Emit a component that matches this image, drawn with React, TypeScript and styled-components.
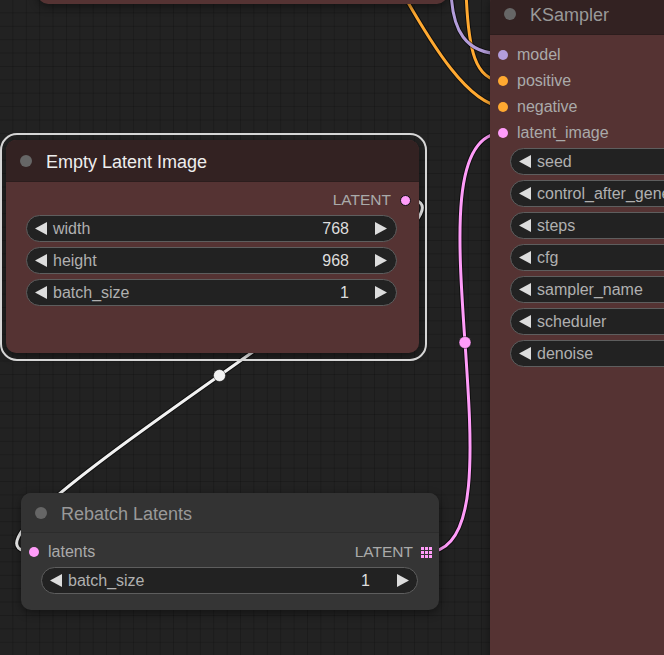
import React from "react";
import styled, { createGlobalStyle, css } from "styled-components";

const GlobalStyle = createGlobalStyle`
  html, body { margin: 0; padding: 0; background: #222; }
  body { font-family: "Liberation Sans", Arial, sans-serif; }
`;

const Canvas = styled.div`
  position: relative;
  width: 664px;
  height: 655px;
  overflow: hidden;
  background-color: #222;
  background-image:
    linear-gradient(to right, rgba(0, 0, 0, 0.18) 1px, transparent 1px),
    linear-gradient(to bottom, rgba(0, 0, 0, 0.18) 1px, transparent 1px);
  background-size: 13.4px 13.4px;
  background-position: -1px -1px;
  font-family: "Liberation Sans", Arial, sans-serif;
`;

const Wires = styled.svg`
  position: absolute;
  inset: 0;
  width: 664px;
  height: 655px;
`;

const Node = styled.div<{
  $x: number;
  $y: number;
  $w: number;
  $h?: number;
  $bg: string;
  $selected?: boolean;
}>`
  position: absolute;
  left: ${(p) => p.$x}px;
  top: ${(p) => p.$y}px;
  width: ${(p) => p.$w}px;
  ${(p) => (p.$h ? `height: ${p.$h}px;` : "")}
  display: flex;
  flex-direction: column;
  background: ${(p) => p.$bg};
  border-radius: 10px;
  box-shadow: 0 3px 10px rgba(0, 0, 0, 0.45);
  ${(p) =>
    p.$selected &&
    css`
      &::before {
        content: "";
        position: absolute;
        inset: -7px -8px -8px -6px;
        border: 2px solid #d6d6d6;
        border-radius: 17px;
        pointer-events: none;
      }
    `}
`;

const TitleBar = styled.div<{ $bg: string; $h?: number }>`
  height: ${(p) => p.$h ?? 42}px;
  flex: none;
  display: flex;
  align-items: center;
  gap: 14px;
  padding-left: 14px;
  background: ${(p) => p.$bg};
  border-radius: 10px 10px 0 0;
  border-bottom: 1px solid rgba(0, 0, 0, 0.12);
  box-sizing: border-box;
`;

const TitleDot = styled.span`
  width: 12px;
  height: 12px;
  border-radius: 50%;
  background: #666;
  flex: none;
`;

const TitleText = styled.span<{ $selected?: boolean }>`
  font-size: 18px;
  line-height: 20px;
  padding-top: 3px;
  color: ${(p) => (p.$selected ? "#eeeeee" : "#999999")};
  white-space: nowrap;
`;

const Body = styled.div<{ $pt?: number }>`
  display: flex;
  flex-direction: column;
  padding-top: ${(p) => p.$pt ?? 6}px;
`;

const SlotRow = styled.div`
  height: 26px;
  display: flex;
  align-items: center;
`;

const InSlot = styled.div`
  display: flex;
  align-items: center;
  gap: 9px;
  padding-left: 8px;
`;

const OutSlot = styled.div<{ $pr?: number; $gap?: number }>`
  margin-left: auto;
  display: flex;
  align-items: center;
  gap: ${(p) => p.$gap ?? 9}px;
  padding-right: ${(p) => p.$pr ?? 9}px;
`;

const Dot = styled.span<{ $color: string; $ring?: boolean }>`
  width: ${(p) => (p.$ring ? 11 : 10)}px;
  height: ${(p) => (p.$ring ? 11 : 10)}px;
  border-radius: 50%;
  background: ${(p) => p.$color};
  box-sizing: border-box;
  flex: none;
  ${(p) => (p.$ring ? "border: 1.5px solid #111;" : "")}
`;

const SlotLabel = styled.span<{ $caps?: boolean }>`
  font-size: ${(p) => (p.$caps ? 15.5 : 16)}px;
  color: #aaaaaa;
  white-space: nowrap;
`;

const ListIcon = styled.span`
  display: grid;
  grid-template-columns: repeat(3, 3px);
  grid-auto-rows: 3px;
  gap: 1px;
  span {
    background: #ff9cf9;
  }
`;

const WidgetList = styled.div<{ $pl: number; $pr: number }>`
  display: flex;
  flex-direction: column;
  gap: 5px;
  margin-top: 2px;
  padding: 0 ${(p) => p.$pr}px 0 ${(p) => p.$pl}px;
`;

const Widget = styled.div<{ $pr?: number }>`
  height: 27px;
  box-sizing: border-box;
  border: 1px solid #5e5e5e;
  border-radius: 14px;
  background: #222;
  display: flex;
  align-items: center;
  padding: 0 ${(p) => p.$pr ?? 9}px 0 8px;
  font-size: 16px;
  white-space: nowrap;
  overflow: hidden;
`;

const WLabel = styled.span`
  color: #b0b0b0;
  margin-left: 6px;
  flex: 1;
`;

const WValue = styled.span<{ $gap?: number }>`
  color: #dddddd;
  margin-right: ${(p) => p.$gap ?? 26}px;
`;

const ArrowSvg = styled.svg`
  flex: none;
  display: block;
`;

const Arrow = ({ dir }: { dir: "l" | "r" }) => (
  <ArrowSvg width="12" height="13" viewBox="0 0 12 13">
    <polygon
      points={dir === "l" ? "12,0 12,13 0,6.5" : "0,0 0,13 12,6.5"}
      fill="#dddddd"
    />
  </ArrowSvg>
);

type W = { label: string; value?: string };

const NumberWidget = ({ w, pr, gap }: { w: W; pr?: number; gap?: number }) => (
  <Widget $pr={pr}>
    <Arrow dir="l" />
    <WLabel>{w.label}</WLabel>
    {w.value !== undefined && (
      <>
        <WValue $gap={gap}>{w.value}</WValue>
        <Arrow dir="r" />
      </>
    )}
  </Widget>
);

const Link = ({ d, color, mid }: { d: string; color: string; mid?: [number, number] }) => (
  <g>
    <path d={d} fill="none" stroke="rgba(0,0,0,0.55)" strokeWidth={5} />
    <path d={d} fill="none" stroke={color} strokeWidth={3} />
    {mid && (
      <circle cx={mid[0]} cy={mid[1]} r={6} fill={color} stroke="rgba(0,0,0,0.4)" strokeWidth={1} />
    )}
  </g>
);

const latentWidgets: W[] = [
  { label: "width", value: "768" },
  { label: "height", value: "968" },
  { label: "batch_size", value: "1" },
];

const kInputs = [
  { label: "model", color: "#b39ddb" },
  { label: "positive", color: "#ffa931" },
  { label: "negative", color: "#ffa931" },
  { label: "latent_image", color: "#ff9cf9" },
];

const kWidgets: W[] = [
  { label: "seed" },
  { label: "control_after_generate" },
  { label: "steps" },
  { label: "cfg" },
  { label: "sampler_name" },
  { label: "scheduler" },
  { label: "denoise" },
];

export default function App() {
  return (
    <>
      <GlobalStyle />
      <Canvas>
        <Wires viewBox="0 0 664 655">
          <Link d="M402,-8 C432,45 468,104 503,107" color="#ffa931" />
          <Link d="M466,-10 C468,50 475,81 503,81" color="#ffa931" />
          <Link d="M451,-10 C452,30 465,54 503,54" color="#b39ddb" />
          <Link d="M405,199 C533,199 -94,552 34,552" color="#f2f2f2" mid={[219.5, 375.5]} />
          <Link d="M427,552 C532,552 398,133 503,133" color="#ff9cf9" mid={[465, 342.5]} />
        </Wires>

        <Node $x={38} $y={-40} $w={409} $h={44} $bg="#553333" />

        <Node $x={6} $y={140} $w={413} $h={213} $bg="#553333" $selected>
          <TitleBar $bg="#332222">
            <TitleDot />
            <TitleText $selected>Empty Latent Image</TitleText>
          </TitleBar>
          <Body $pt={5}>
            <SlotRow>
              <OutSlot $pr={8}>
                <SlotLabel $caps>LATENT</SlotLabel>
                <Dot $color="#ff9cf9" $ring />
              </OutSlot>
            </SlotRow>
            <WidgetList $pl={20} $pr={22}>
              {latentWidgets.map((w) => (
                <NumberWidget key={w.label} w={w} />
              ))}
            </WidgetList>
          </Body>
        </Node>

        <Node $x={21} $y={493} $w={418} $h={117} $bg="#353535">
          <TitleBar $bg="#333333" $h={40}>
            <TitleDot />
            <TitleText>Rebatch Latents</TitleText>
          </TitleBar>
          <Body>
            <SlotRow>
              <InSlot>
                <Dot $color="#ff9cf9" />
                <SlotLabel>latents</SlotLabel>
              </InSlot>
              <OutSlot $pr={7} $gap={8}>
                <SlotLabel $caps>LATENT</SlotLabel>
                <ListIcon>
                  {Array.from({ length: 9 }).map((_, i) => (
                    <span key={i} />
                  ))}
                </ListIcon>
              </OutSlot>
            </SlotRow>
            <WidgetList $pl={20} $pr={21}>
              <NumberWidget w={{ label: "batch_size", value: "1" }} pr={8} gap={27} />
            </WidgetList>
          </Body>
        </Node>

        <Node $x={490} $y={-7} $w={420} $h={700} $bg="#553333">
          <TitleBar $bg="#332222">
            <TitleDot />
            <TitleText>KSampler</TitleText>
          </TitleBar>
          <Body $pt={7}>
            {kInputs.map((s) => (
              <SlotRow key={s.label}>
                <InSlot>
                  <Dot $color={s.color} />
                  <SlotLabel>{s.label}</SlotLabel>
                </InSlot>
              </SlotRow>
            ))}
            <WidgetList $pl={20} $pr={20}>
              {kWidgets.map((w) => (
                <NumberWidget key={w.label} w={w} />
              ))}
            </WidgetList>
          </Body>
        </Node>
      </Canvas>
    </>
  );
}
